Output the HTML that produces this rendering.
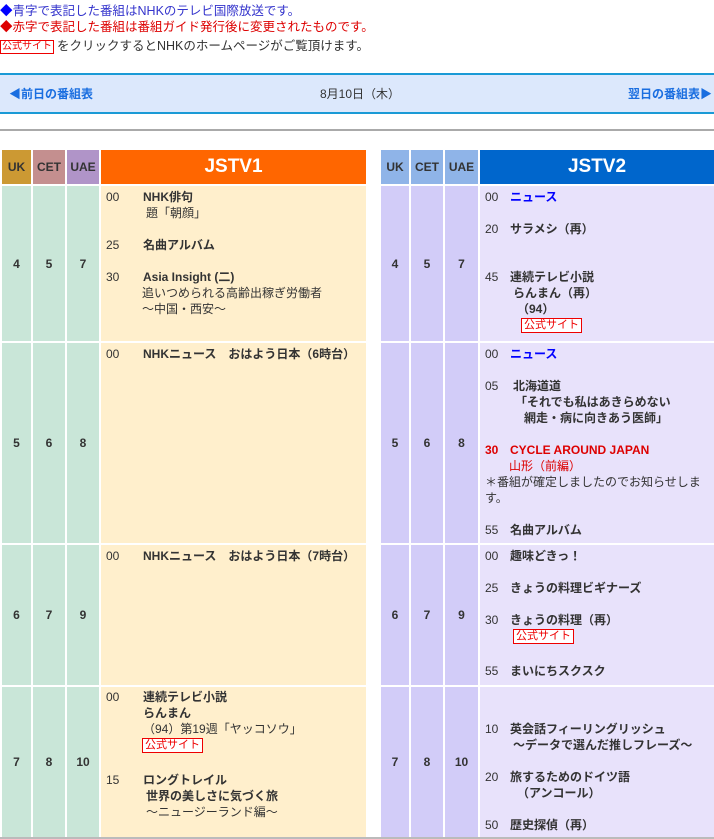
<!DOCTYPE html>
<html><head><meta charset="utf-8"><style>
*{margin:0;padding:0;box-sizing:border-box}
body{width:714px;height:839px;overflow:hidden;background:#fff;font-family:"Liberation Sans","Noto Sans CJK JP",sans-serif;font-size:12px;color:#333;position:relative}
.a{position:absolute;white-space:nowrap;line-height:16px}
.b{font-weight:bold}
.box{position:absolute}
.c{position:absolute;display:flex;align-items:center;justify-content:center;font-weight:bold;font-size:12px;color:#333}
.badge{position:absolute;white-space:nowrap;border:1px solid #e00;color:#e00;font-size:11px;line-height:13px;padding:0 2px;background:#fff}
.blue{color:#00f}.red{color:#d00}
</style></head><body>
<div class="a" style="left:0;top:3px;color:#33c;font-size:12.5px"><span style="color:#00f">◆</span>青字で表記した番組はNHKのテレビ国際放送です。</div>
<div class="a" style="left:0;top:19px;color:#d00;font-size:12.5px">◆赤字で表記した番組は番組ガイド発行後に変更されたものです。</div>
<div class="badge" style="left:0;top:40px;font-size:10px;line-height:12px;padding:0 1px">公式サイト</div>
<div class="a" style="left:57px;top:38px;font-size:12.5px">をクリックするとNHKのホームページがご覧頂けます。</div>

<div class="box" style="left:0;top:73px;width:714px;height:41px;background:#dce8fc;border-top:2px solid #1a9ad6;border-bottom:2px solid #1a9ad6"></div>
<div class="a b" style="left:9px;top:86px;color:#1a6ee0">◀前日の番組表</div>
<div class="a" style="left:320px;top:86px;color:#333">8月10日（木）</div>
<div class="a b" style="left:628px;top:86px;color:#1a6ee0">翌日の番組表▶</div>
<div class="box" style="left:0;top:129px;width:714px;height:2px;background:#aaa"></div>

<div class="c" style="left:2px;top:150px;width:29px;height:34px;background:#cc9933">UK</div>
<div class="c" style="left:33px;top:150px;width:32px;height:34px;background:#c48f8f">CET</div>
<div class="c" style="left:67px;top:150px;width:32px;height:34px;background:#b094c8">UAE</div>
<div class="c" style="left:101px;top:150px;width:265px;height:34px;background:#ff6600;color:#fff;font-size:19px">JSTV1</div>
<div class="c" style="left:381px;top:150px;width:28px;height:34px;background:#8fb4e8">UK</div>
<div class="c" style="left:411px;top:150px;width:32px;height:34px;background:#8fb4e8">CET</div>
<div class="c" style="left:445px;top:150px;width:33px;height:34px;background:#8fb4e8">UAE</div>
<div class="c" style="left:480px;top:150px;width:234px;height:34px;background:#0066cc;color:#fff;font-size:19px">JSTV2</div>

<div class="c" style="left:2px;top:186px;width:29px;height:155px;background:#c9e6d8">4</div>
<div class="c" style="left:33px;top:186px;width:32px;height:155px;background:#c9e6d8">5</div>
<div class="c" style="left:67px;top:186px;width:32px;height:155px;background:#c9e6d8">7</div>
<div class="box" style="left:101px;top:186px;width:265px;height:155px;background:#ffefcc"></div>
<div class="c" style="left:381px;top:186px;width:28px;height:155px;background:#d2ccf8">4</div>
<div class="c" style="left:411px;top:186px;width:32px;height:155px;background:#d2ccf8">5</div>
<div class="c" style="left:445px;top:186px;width:33px;height:155px;background:#d2ccf8">7</div>
<div class="box" style="left:480px;top:186px;width:234px;height:155px;background:#e8e2fb"></div>

<div class="c" style="left:2px;top:343px;width:29px;height:200px;background:#c9e6d8">5</div>
<div class="c" style="left:33px;top:343px;width:32px;height:200px;background:#c9e6d8">6</div>
<div class="c" style="left:67px;top:343px;width:32px;height:200px;background:#c9e6d8">8</div>
<div class="box" style="left:101px;top:343px;width:265px;height:200px;background:#ffefcc"></div>
<div class="c" style="left:381px;top:343px;width:28px;height:200px;background:#d2ccf8">5</div>
<div class="c" style="left:411px;top:343px;width:32px;height:200px;background:#d2ccf8">6</div>
<div class="c" style="left:445px;top:343px;width:33px;height:200px;background:#d2ccf8">8</div>
<div class="box" style="left:480px;top:343px;width:234px;height:200px;background:#e8e2fb"></div>

<div class="c" style="left:2px;top:545px;width:29px;height:140px;background:#c9e6d8">6</div>
<div class="c" style="left:33px;top:545px;width:32px;height:140px;background:#c9e6d8">7</div>
<div class="c" style="left:67px;top:545px;width:32px;height:140px;background:#c9e6d8">9</div>
<div class="box" style="left:101px;top:545px;width:265px;height:140px;background:#ffefcc"></div>
<div class="c" style="left:381px;top:545px;width:28px;height:140px;background:#d2ccf8">6</div>
<div class="c" style="left:411px;top:545px;width:32px;height:140px;background:#d2ccf8">7</div>
<div class="c" style="left:445px;top:545px;width:33px;height:140px;background:#d2ccf8">9</div>
<div class="box" style="left:480px;top:545px;width:234px;height:140px;background:#e8e2fb"></div>

<div class="c" style="left:2px;top:687px;width:29px;height:150px;background:#c9e6d8">7</div>
<div class="c" style="left:33px;top:687px;width:32px;height:150px;background:#c9e6d8">8</div>
<div class="c" style="left:67px;top:687px;width:32px;height:150px;background:#c9e6d8">10</div>
<div class="box" style="left:101px;top:687px;width:265px;height:150px;background:#ffefcc"></div>
<div class="c" style="left:381px;top:687px;width:28px;height:150px;background:#d2ccf8">7</div>
<div class="c" style="left:411px;top:687px;width:32px;height:150px;background:#d2ccf8">8</div>
<div class="c" style="left:445px;top:687px;width:33px;height:150px;background:#d2ccf8">10</div>
<div class="box" style="left:480px;top:687px;width:234px;height:150px;background:#e8e2fb"></div>
<div class="box" style="left:0;top:837px;width:714px;height:2px;background:#bbb"></div>

<div class="a" style="left:106px;top:189px">00</div><div class="a b" style="left:143px;top:189px">NHK俳句</div>
<div class="a" style="left:146px;top:205px">題「朝顔」</div>
<div class="a" style="left:106px;top:237px">25</div><div class="a b" style="left:143px;top:237px">名曲アルバム</div>
<div class="a" style="left:106px;top:269px">30</div><div class="a b" style="left:143px;top:269px">Asia Insight (二)</div>
<div class="a" style="left:142px;top:285px">追いつめられる高齢出稼ぎ労働者</div>
<div class="a" style="left:142px;top:301px">～中国・西安～</div>

<div class="a" style="left:106px;top:346px">00</div><div class="a b" style="left:143px;top:346px">NHKニュース　おはよう日本（6時台）</div>
<div class="a" style="left:106px;top:548px">00</div><div class="a b" style="left:143px;top:548px">NHKニュース　おはよう日本（7時台）</div>

<div class="a" style="left:106px;top:689px">00</div><div class="a b" style="left:143px;top:689px">連続テレビ小説</div>
<div class="a b" style="left:143px;top:705px">らんまん</div>
<div class="a" style="left:143px;top:721px">（94）第19週「ヤッコソウ」</div>
<div class="badge" style="left:142px;top:738px">公式サイト</div>
<div class="a" style="left:106px;top:772px">15</div><div class="a b" style="left:143px;top:772px">ロングトレイル</div>
<div class="a b" style="left:146px;top:788px">世界の美しさに気づく旅</div>
<div class="a" style="left:146px;top:804px">～ニュージーランド編～</div>

<div class="a" style="left:485px;top:189px">00</div><div class="a b blue" style="left:510px;top:189px">ニュース</div>
<div class="a" style="left:485px;top:221px">20</div><div class="a b" style="left:510px;top:221px">サラメシ（再）</div>
<div class="a" style="left:485px;top:269px">45</div><div class="a b" style="left:510px;top:269px">連続テレビ小説</div>
<div class="a b" style="left:513px;top:285px">らんまん（再）</div>
<div class="a b" style="left:517px;top:301px">（94）</div>
<div class="badge" style="left:521px;top:318px">公式サイト</div>

<div class="a" style="left:485px;top:346px">00</div><div class="a b blue" style="left:510px;top:346px">ニュース</div>
<div class="a" style="left:485px;top:378px">05</div><div class="a b" style="left:513px;top:378px">北海道道</div>
<div class="a b" style="left:515px;top:394px">「それでも私はあきらめない</div>
<div class="a b" style="left:524px;top:410px">網走・病に向きあう医師」</div>
<div class="a b red" style="left:485px;top:442px">30</div><div class="a b red" style="left:510px;top:442px">CYCLE AROUND JAPAN</div>
<div class="a red" style="left:509px;top:458px">山形（前編）</div>
<div class="a" style="left:485px;top:474px">＊番組が確定しましたのでお知らせしま</div>
<div class="a" style="left:485px;top:490px">す。</div>
<div class="a" style="left:485px;top:522px">55</div><div class="a b" style="left:510px;top:522px">名曲アルバム</div>

<div class="a" style="left:485px;top:548px">00</div><div class="a b" style="left:510px;top:548px">趣味どきっ！</div>
<div class="a" style="left:485px;top:580px">25</div><div class="a b" style="left:510px;top:580px">きょうの料理ビギナーズ</div>
<div class="a" style="left:485px;top:612px">30</div><div class="a b" style="left:510px;top:612px">きょうの料理（再）</div>
<div class="badge" style="left:513px;top:629px">公式サイト</div>
<div class="a" style="left:485px;top:663px">55</div><div class="a b" style="left:510px;top:663px">まいにちスクスク</div>

<div class="a" style="left:485px;top:721px">10</div><div class="a b" style="left:510px;top:721px">英会話フィーリングリッシュ</div>
<div class="a b" style="left:513px;top:737px">～データで選んだ推しフレーズ～</div>
<div class="a" style="left:485px;top:769px">20</div><div class="a b" style="left:510px;top:769px">旅するためのドイツ語</div>
<div class="a b" style="left:517px;top:785px">（アンコール）</div>
<div class="a" style="left:485px;top:817px">50</div><div class="a b" style="left:510px;top:817px">歴史探偵（再）</div>
</body></html>
